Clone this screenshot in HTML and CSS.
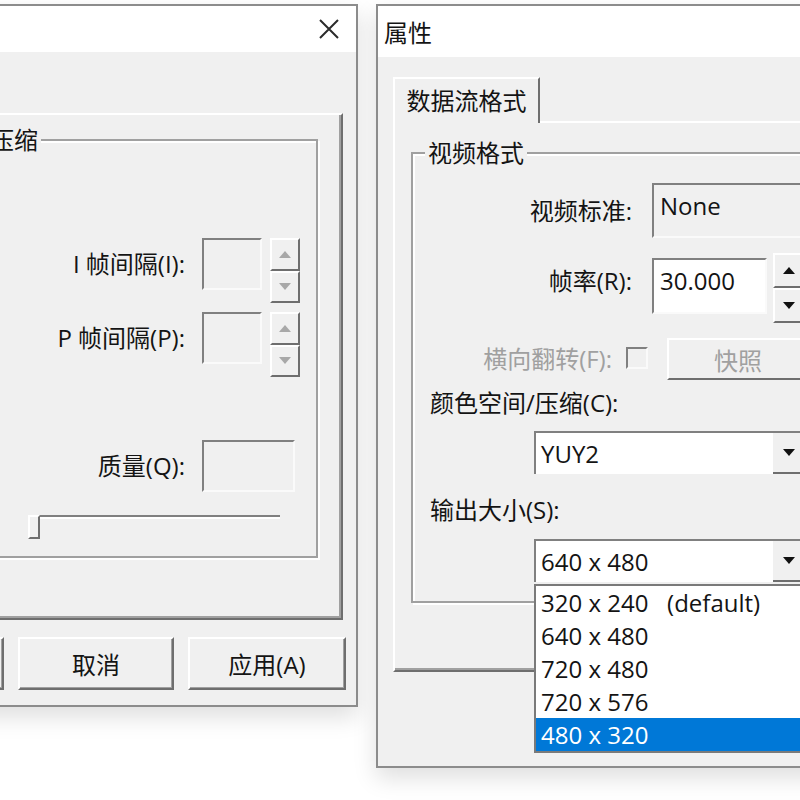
FILE: index.html
```html
<!DOCTYPE html>
<html lang="zh-CN">
<head>
    <meta charset="UTF-8">
    <title>属性</title>
    <link rel="stylesheet" href="styles.css">
</head>
<body>
    <div class="desktop">
        <!-- compression dialog, partly off screen -->
        <div class="win win-codec">
            <div class="titlebar">
                <svg class="close" width="22" height="20" viewBox="0 0 22 20"><path d="M2 1L20 19M20 1L2 19" stroke="#2b2b2b" stroke-width="2" fill="none"/></svg>
            </div>
            <div class="win-body">
                <div class="page">
                    <div class="group group-codec">
                        <span class="group-title">压缩</span>
                        <div class="row">
                            <span class="lbl">I 帧间隔(I):</span>
                            <div class="edit"></div>
                            <div class="spin">
                                <div class="spin-btn"><svg width="12" height="7" viewBox="0 0 12 7"><path d="M0 7H12L6 0Z" fill="#a8a8a8"/></svg></div>
                                <div class="spin-btn"><svg width="12" height="7" viewBox="0 0 12 7"><path d="M0 0H12L6 7Z" fill="#a8a8a8"/></svg></div>
                            </div>
                        </div>
                        <div class="row row-p">
                            <span class="lbl">P 帧间隔(P):</span>
                            <div class="edit"></div>
                            <div class="spin">
                                <div class="spin-btn"><svg width="12" height="7" viewBox="0 0 12 7"><path d="M0 7H12L6 0Z" fill="#a8a8a8"/></svg></div>
                                <div class="spin-btn"><svg width="12" height="7" viewBox="0 0 12 7"><path d="M0 0H12L6 7Z" fill="#a8a8a8"/></svg></div>
                            </div>
                        </div>
                        <div class="row row-q">
                            <span class="lbl">质量(Q):</span>
                            <div class="edit edit-wide"></div>
                        </div>
                        <div class="slider">
                            <div class="slider-track"></div>
                            <div class="slider-thumb"></div>
                        </div>
                    </div>
                </div>
                <div class="buttons">
                    <div class="btn">确定</div>
                    <div class="btn">取消</div>
                    <div class="btn btn-apply">应用(A)</div>
                </div>
            </div>
        </div>

        <!-- capture properties dialog -->
        <div class="win win-props">
            <div class="titlebar">属性</div>
            <div class="win-body">
                <div class="tabs">
                    <div class="tab">数据流格式</div>
                </div>
                <div class="page">
                    <div class="group group-video">
                        <span class="group-title">视频格式</span>
                        <div class="row">
                            <span class="caption caption-std">视频标准:</span>
                            <div class="field field-std">None</div>
                        </div>
                        <div class="row row-rate">
                            <span class="caption caption-rate">帧率(R):</span>
                            <div class="field field-rate">30.000</div>
                            <div class="spin spin-rate">
                                <div class="spin-btn"><svg width="12" height="7" viewBox="0 0 12 7"><path d="M0 7H12L6 0Z" fill="#111"/></svg></div>
                                <div class="spin-btn"><svg width="12" height="7" viewBox="0 0 12 7"><path d="M0 0H12L6 7Z" fill="#111"/></svg></div>
                            </div>
                        </div>
                        <div class="row row-flip">
                            <span class="caption caption-flip">横向翻转(F):</span>
                            <div class="check"></div>
                            <div class="btn btn-snap">快照</div>
                        </div>
                        <div class="heading">颜色空间/压缩(C):</div>
                        <div class="combo">
                            <span class="combo-text">YUY2</span>
                            <span class="combo-btn"><svg width="12" height="7" viewBox="0 0 12 7"><path d="M0 0H12L6 7Z" fill="#111"/></svg></span>
                        </div>
                        <div class="heading heading-size">输出大小(S):</div>
                        <div class="combo combo-size">
                            <span class="combo-text">640 x 480</span>
                            <span class="combo-btn"><svg width="12" height="7" viewBox="0 0 12 7"><path d="M0 0H12L6 7Z" fill="#111"/></svg></span>
                            <ul class="droplist">
                                <li>320 x 240&nbsp;&nbsp;&nbsp;(default)</li>
                                <li>640 x 480</li>
                                <li>720 x 480</li>
                                <li>720 x 576</li>
                                <li class="selected">480 x 320</li>
                            </ul>
                        </div>
                    </div>
                </div>
            </div>
        </div>
    </div>
</body>
</html>
```

FILE: styles.css
```css
body { margin: 0; background: #fff; font-family: "Open Sans", "Noto Sans CJK SC", sans-serif; font-size: 24px; color: #141414; }
.desktop { position: relative; width: 800px; height: 800px; overflow: hidden; background: #fff; }

/* windows */
.win { position: absolute; top: 4px; box-sizing: border-box; border: 2px solid #8c8c8c; background: #f0f0f0; display: flex; flex-direction: column; box-shadow: 0 10px 22px rgba(0, 0, 0, 0.13); }
.win-codec { left: -42px; width: 400px; height: 703px; }
.win-props { left: 376px; width: 480px; height: 764px; }
.titlebar { flex: none; background: #fff; display: flex; align-items: center; }
.win-codec .titlebar { height: 46px; justify-content: flex-end; padding-right: 16px; }
.win-props .titlebar { height: 51px; padding-left: 6px; }
.win-body { flex: 1; display: flex; flex-direction: column; min-height: 0; }
.win-codec .win-body { padding: 61px 10px 15px 0; }
.win-props .win-body { padding: 20px 0 94px 15px; }

/* property page + tabs */
.page { box-sizing: border-box; border: 2px solid; border-color: #fff #6e6e6e #6e6e6e #fff; box-shadow: inset -2px -2px 0 #a0a0a0; }
.win-codec .page { height: 507px; margin-right: 3px; }
.win-props .page { flex: 1; }
.tabs { display: flex; height: 44px; flex: none; }
.tab { position: relative; z-index: 1; box-sizing: border-box; width: 147px; height: 46px; border: 2px solid; border-bottom: 0; border-color: #fff #6e6e6e #f0f0f0 #fff; background: #f0f0f0; display: flex; align-items: center; justify-content: center; padding-bottom: 4px; }

/* etched group boxes */
.group { position: relative; box-sizing: border-box; border: 2px solid #a0a0a0; box-shadow: inset 2px 2px 0 #fff, 2px 2px 0 #fff; }
.group-title { position: absolute; top: -18px; padding: 0 3px; background: #f0f0f0; line-height: 34px; }
.group-codec { height: 419px; margin: 24px 23px 0 16px; padding: 97px 16px 0 0; }
.group-codec .group-title { left: 7px; }
.group-video { margin: 29px 0 0 16px; padding: 29px 0 19px 0; }
.group-video .group-title { left: 12px; }

.row { display: flex; align-items: flex-start; }
.row-p { margin-top: 9px; }
.row-q { margin-top: 63px; }
.lbl { flex: 1; text-align: right; white-space: nowrap; height: 52px; line-height: 52px; margin-right: 17px; }

/* sunken edit boxes */
.edit, .field, .check { box-sizing: border-box; border: 2px solid; border-color: #808080 #fafafa #fafafa #808080; }
.edit { flex: none; width: 60px; height: 52px; }
.edit-wide { width: 93px; margin-right: 5px; }
.field { flex: none; padding: 6px 6px; line-height: 30px; white-space: nowrap; }

/* spin buttons */
.spin { flex: none; width: 30px; height: 65px; margin-left: 8px; display: flex; flex-direction: column; }
.spin-btn { flex: 1; box-sizing: border-box; border: 2px solid; border-color: #fff #6e6e6e #6e6e6e #fff; display: flex; align-items: center; justify-content: center; }
.spin-rate { width: 32px; height: 70px; margin-left: 6px; }

/* slider */
.slider { position: relative; height: 25px; margin-top: 23px; }
.slider-track { margin: 8px 0 0 50px; width: 250px; height: 2px; background: #808080; box-shadow: 0 2px 0 #fff; }
.slider-thumb { position: absolute; left: 48px; top: 0; box-sizing: border-box; width: 12px; height: 24px; background: #f0f0f0; border: 2px solid; border-color: #fff #6e6e6e #6e6e6e #fff; }

/* push buttons */
.buttons { display: flex; justify-content: flex-end; gap: 14px; margin-top: 17px; height: 53px; flex: none; }
.btn { flex: none; box-sizing: border-box; width: 156px; height: 53px; border: 2px solid; border-color: #fff #6e6e6e #6e6e6e #fff; box-shadow: inset -1px -1px 0 #a0a0a0; display: flex; align-items: center; justify-content: center; white-space: nowrap; }
.btn-apply { width: 158px; }

/* right dialog rows */
.caption { flex: none; width: 219px; text-align: right; margin-right: 20px; white-space: nowrap; }
.caption-std { line-height: 55px; }
.field-std { width: 153px; height: 55px; background: #f0f0f0; }
.row-rate { margin-top: 15px; }
.caption-rate { line-height: 56px; }
.field-rate { width: 115px; height: 56px; margin-top: 5px; background: #fff; }
.row-flip { margin-top: 15px; height: 42px; }
.caption-flip { width: 199px; margin-right: 14px; line-height: 42px; color: #a0a0a0; }
.check { flex: none; width: 22px; height: 22px; margin-top: 9px; background: #f0f0f0; }
.btn-snap { width: 142px; height: 42px; margin-left: 19px; color: #a0a0a0; box-shadow: none; }
.heading { margin: 6px 0 0 17px; line-height: 34px; }
.heading-size { margin-top: 19px; }

/* combo boxes */
.combo { position: relative; box-sizing: border-box; width: 271px; height: 43px; margin: 11px 0 0 121px; display: flex; border-top: 2px solid #808080; border-left: 2px solid #808080; background: #fff; }
.combo-size { margin-top: 12px; }
.combo-text { flex: 1; padding-left: 5px; line-height: 41px; white-space: nowrap; }
.combo-btn { width: 32px; box-sizing: border-box; background: #f0f0f0; border-bottom: 2px solid #6e6e6e; display: flex; align-items: center; justify-content: center; }
.droplist { position: absolute; top: 43px; left: -2px; width: 290px; margin: 0; padding: 0; list-style: none; background: #fff; border: 2px solid #7a7a7a; }
.droplist li { height: 33px; line-height: 33px; padding-left: 5px; white-space: nowrap; }
.droplist li.selected { background: #0078d7; color: #fff; }
```
